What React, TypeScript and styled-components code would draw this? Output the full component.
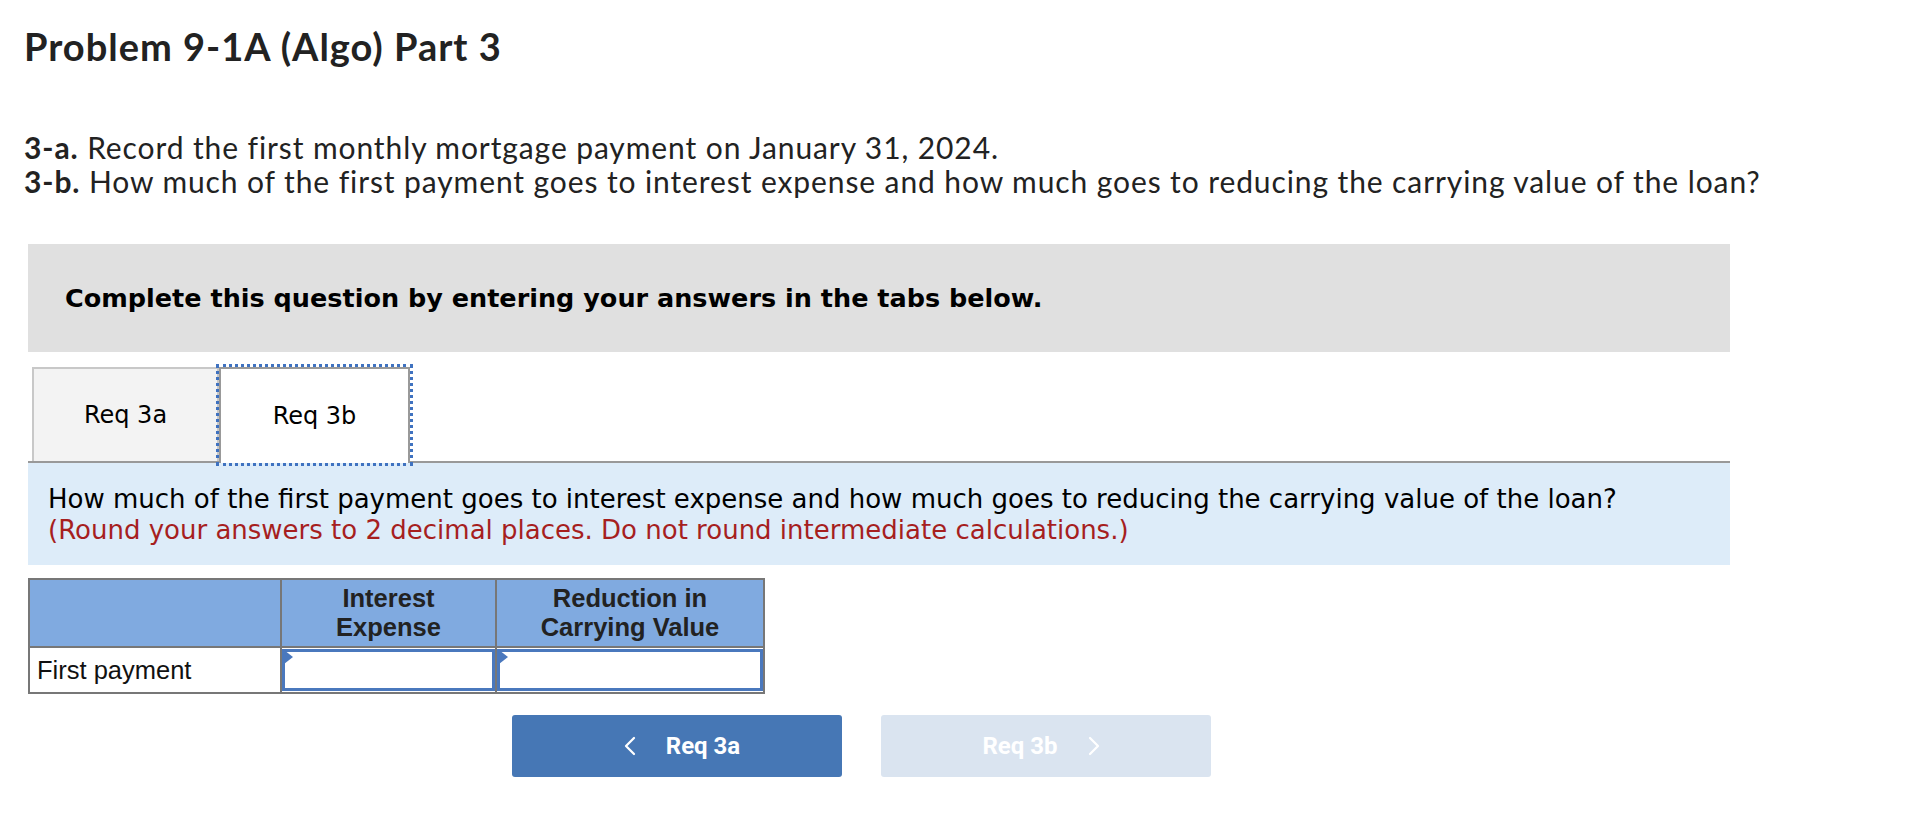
import * as React from "react";
import styled, { createGlobalStyle, css } from "styled-components";
import { ChevronLeft, ChevronRight } from "lucide-react";

const GlobalStyle = createGlobalStyle`
  html, body {
    margin: 0;
    padding: 0;
    background: #fff;
  }
  * {
    box-sizing: border-box;
  }
`;

export default function App() {
  return (
    <>
      <GlobalStyle />
      <Page>
        <Title>Problem 9-1A (Algo) Part 3</Title>
        <Intro>
          <p>
            <b>3-a.</b> Record the first monthly mortgage payment on January 31, 2024.
          </p>
          <p>
            <b>3-b.</b> How much of the first payment goes to interest expense and how much goes to
            reducing the carrying value of the loan?
          </p>
        </Intro>
        <Notice>Complete this question by entering your answers in the tabs below.</Notice>
        <Tabs>
          <Tab>Req 3a</Tab>
          <Tab active>Req 3b</Tab>
        </Tabs>
        <Question>
          <div>
            How much of the first payment goes to interest expense and how much goes to reducing
            the carrying value of the loan?
          </div>
          <Hint>(Round your answers to 2 decimal places. Do not round intermediate calculations.)</Hint>
        </Question>
        <Table>
          <colgroup>
            <col style={{ width: 252 }} />
            <col style={{ width: 215 }} />
            <col style={{ width: 268 }} />
          </colgroup>
          <thead>
            <tr>
              <Th />
              <Th>
                Interest
                <br />
                Expense
              </Th>
              <Th>
                Reduction in
                <br />
                Carrying Value
              </Th>
            </tr>
          </thead>
          <tbody>
            <tr>
              <Td>First payment</Td>
              <InputCell>
                <Field />
              </InputCell>
              <InputCell>
                <Field />
              </InputCell>
            </tr>
          </tbody>
        </Table>
        <NavRow>
          <NavButton>
            <ChevronLeft size={32} strokeWidth={1.7} />
            <span>Req 3a</span>
          </NavButton>
          <NavButton disabled>
            <span>Req 3b</span>
            <ChevronRight size={32} strokeWidth={1.7} />
          </NavButton>
        </NavRow>
      </Page>
    </>
  );
}

const Page = styled.div`
  padding: 24px 0 40px 0;
  width: 1922px;
  color: #222;
`;

const Title = styled.h1`
  margin: 0 0 0 24px;
  font-family: "Lato", "Open Sans", sans-serif;
  font-weight: 700;
  font-size: 38px;
  letter-spacing: 1px;
  line-height: 44px;
  color: #222;
`;

const Intro = styled.div`
  margin: 62px 0 0 24px;
  font-family: "Lato", "Open Sans", sans-serif;
  font-size: 30px;
  letter-spacing: 0.9px;
  line-height: 34px;
  color: #222;
  p {
    margin: 0;
  }
  b {
    font-weight: 700;
  }
`;

const Notice = styled.div`
  margin: 46px 0 0 28px;
  width: 1702px;
  height: 108px;
  background: #e0e0e0;
  display: flex;
  align-items: center;
  padding-left: 37px;
  font-family: "DejaVu Sans", Verdana, sans-serif;
  font-weight: 700;
  font-size: 25.5px;
  color: #000;
`;

const Tabs = styled.div`
  margin: 15px 0 0 28px;
  width: 1702px;
  padding-left: 4px;
  display: flex;
  border-bottom: 2px solid #999;
`;

const Tab = styled.div<{ active?: boolean }>`
  height: 94px;
  display: flex;
  align-items: center;
  justify-content: center;
  font-family: "DejaVu Sans", Verdana, sans-serif;
  font-size: 24px;
  color: #000;
  width: 187px;
  background: #f3f3f3;
  border: 2px solid #c8c8c8;
  border-bottom: none;
  ${(p) =>
    p.active &&
    css`
      width: 191px;
      background: #fff;
      border-color: #999;
      margin-bottom: -2px;
      height: 96px;
      outline: 3px dotted #3f72c0;
      outline-offset: 0px;
    `}
`;

const Question = styled.div`
  margin: 0 0 0 28px;
  width: 1702px;
  height: 102px;
  background: #ddecf9;
  padding: 21px 20px 0 20px;
  font-family: "DejaVu Sans", Verdana, sans-serif;
  font-size: 26px;
  line-height: 31px;
  color: #000;
`;

const Hint = styled.div`
  color: #a61f1f;
`;

const Table = styled.table`
  margin: 13px 0 0 28px;
  border-collapse: collapse;
  table-layout: fixed;
  width: 735px;
  font-family: "Liberation Sans", Arial, sans-serif;
  font-size: 25.5px;
`;

const Th = styled.th`
  height: 68px;
  background: #80aae0;
  border: 2px solid #777;
  font-weight: 700;
  line-height: 29px;
  color: #222;
  text-align: center;
  padding: 0;
`;

const Td = styled.td`
  height: 46px;
  border: 2px solid #777;
  padding: 0 7px;
  color: #111;
  text-align: left;
`;

const InputCell = styled.td`
  height: 46px;
  border: 2px solid #777;
  padding: 0;
  position: relative;
  &::before {
    content: "";
    position: absolute;
    top: 2px;
    left: 2px;
    border-style: solid;
    border-width: 7px 0 7px 9px;
    border-color: transparent transparent transparent #4a78bd;
  }
`;

const Field = styled.div`
  height: 42px;
  border: 3px solid #4a78bd;
  background: #fff;
`;

const NavRow = styled.div`
  margin-top: 21px;
  padding-left: 512px;
  display: flex;
  gap: 39px;
`;

const NavButton = styled.button`
  width: 330px;
  height: 62px;
  border: none;
  border-radius: 3px;
  background: #4677b5;
  color: #fff;
  font-family: "Roboto", "Liberation Sans", sans-serif;
  font-weight: 700;
  font-size: 24px;
  display: flex;
  align-items: center;
  justify-content: center;
  gap: 20px;
  cursor: pointer;
  &:disabled {
    background: #dae4f0;
    cursor: default;
  }
`;
